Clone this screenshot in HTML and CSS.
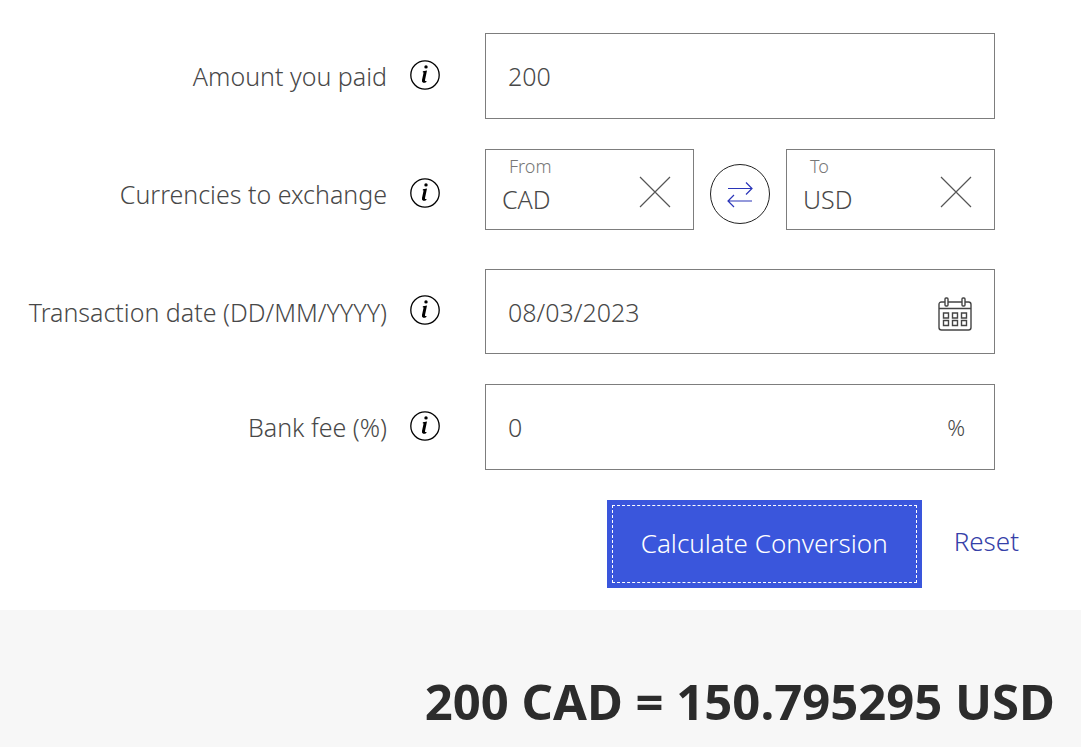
FILE: index.html
```html
<!DOCTYPE html>
<html lang="en">
<head>
<meta charset="utf-8">
<meta name="viewport" content="width=device-width, initial-scale=1">
<title>Currency converter</title>
<link rel="stylesheet" href="styles.css">
</head>
<body>
<svg class="sprite" aria-hidden="true">
  <symbol id="info" viewBox="0 0 30 30">
    <circle cx="15" cy="15" r="14.2" fill="none" stroke="currentColor" stroke-width="1.3"/>
    <circle cx="16" cy="6.9" r="1.7"/>
    <path d="M12.9 11.2 L17 10.5 L15 19.9 Q14.7 21.5 16.6 21 L16.3 21.9 Q14.8 23.1 13.2 22.8 Q11.5 22.3 12 20 L13.6 12.5 L12.7 12.2 Z"/>
  </symbol>
  <symbol id="cross" viewBox="0 0 32 32">
    <path d="M1 1 31 31M31 1 1 31" fill="none" stroke="currentColor" stroke-width="1.2"/>
  </symbol>
</svg>
<main>
  <form class="converter">
    <div class="row">
      <div class="row-label">
        <label for="amount">Amount you paid</label>
        <button class="icon-button" type="button" aria-label="About the amount"><svg class="info"><use href="#info"/></svg></button>
      </div>
      <div class="field"><input id="amount" type="text" value="200"></div>
    </div>

    <div class="row">
      <div class="row-label">
        <label for="from">Currencies to exchange</label>
        <button class="icon-button" type="button" aria-label="About the currencies"><svg class="info"><use href="#info"/></svg></button>
      </div>
      <div class="pair">
        <div class="currency">
          <div class="currency-text">
            <label for="from">From</label>
            <input id="from" type="text" value="CAD">
          </div>
          <button class="icon-button" type="button" aria-label="Clear from"><svg class="cross"><use href="#cross"/></svg></button>
        </div>
        <button class="swap" type="button" aria-label="Swap currencies">
          <svg class="arrows" viewBox="0 0 26 26"><path d="M1 7.500H25M19 1.500 25 7.500 19 13.500M25 20H1M7 14 1 20 7 26" fill="none" stroke="currentColor" stroke-width="1.2"/></svg>
        </button>
        <div class="currency">
          <div class="currency-text">
            <label for="to">To</label>
            <input id="to" type="text" value="USD">
          </div>
          <button class="icon-button" type="button" aria-label="Clear to"><svg class="cross"><use href="#cross"/></svg></button>
        </div>
      </div>
    </div>

    <div class="row">
      <div class="row-label">
        <label for="date">Transaction date (DD/MM/YYYY)</label>
        <button class="icon-button" type="button" aria-label="About the date"><svg class="info"><use href="#info"/></svg></button>
      </div>
      <div class="field field-date">
        <input id="date" type="text" value="08/03/2023">
        <button class="icon-button" type="button" aria-label="Open calendar">
          <svg class="calendar" viewBox="0 0 34 34" fill="none" stroke="currentColor" stroke-width="1.4">
            <path d="M7 5H3.500Q1 5 1 7.500V30.500Q1 33 3.500 33H30.500Q33 33 33 30.500V7.500Q33 5 30.500 5H27M10 5H24M1 11.500H33"/>
            <rect x="7" y="1" width="3" height="8" rx="1"/>
            <rect x="24" y="1" width="3" height="8" rx="1"/>
            <path d="M5.500 16h5v5h-5zM14.500 16h5v5h-5zM23.500 16h5v5h-5zM5.500 23.500h5v5h-5zM14.500 23.500h5v5h-5zM23.500 23.500h5v5h-5z"/>
          </svg>
        </button>
      </div>
    </div>

    <div class="row">
      <div class="row-label">
        <label for="fee">Bank fee (%)</label>
        <button class="icon-button" type="button" aria-label="About the bank fee"><svg class="info"><use href="#info"/></svg></button>
      </div>
      <div class="field"><input id="fee" type="text" value="0"><span class="unit">%</span></div>
    </div>

    <div class="actions">
      <button class="submit" type="button">Calculate Conversion</button>
      <a class="reset" href="#">Reset</a>
    </div>
  </form>
  <section class="result">
    <h1>200 CAD = 150.795295 USD</h1>
  </section>
</main>
</body>
</html>
```
FILE: styles.css
```css
* {
  box-sizing: border-box;
}

body {
  margin: 0;
  background: #fff;
  color: #484848;
  font: 300 25px/34px "Noto Sans", "Open Sans", sans-serif;
}

main {
  min-height: 100vh;
  display: flex;
  flex-direction: column;
}

.sprite {
  display: none;
}

button,
input {
  font: inherit;
  color: inherit;
  margin: 0;
  border-radius: 0;
}

.converter {
  display: flex;
  flex-direction: column;
  gap: 30px;
  padding: 33px 62px 22px 24px;
}

.row {
  display: grid;
  grid-template-columns: 416fr 510fr;
  column-gap: 45px;
  align-items: center;
  padding-right: 24px;
}

.row-label {
  display: flex;
  align-items: center;
  justify-content: flex-end;
  gap: 23px;
  white-space: nowrap;
}

.icon-button {
  display: flex;
  flex: none;
  padding: 0;
  border: 0;
  background: none;
  cursor: pointer;
}

.info {
  width: 30px;
  height: 30px;
  margin-bottom: 3px;
  color: #000;
}

.field {
  display: flex;
  align-items: center;
  gap: 16px;
  height: 86px;
  padding: 0 22px;
  border: 1px solid #7d7d7d;
}

.field-date {
  height: 85px;
}

.field input,
.currency input {
  flex: 1;
  width: 100%;
  min-width: 0;
  padding: 0;
  border: 0;
  background: none;
  outline: 0;
}

.calendar {
  width: 34px;
  height: 34px;
  margin-top: 4px;
  color: #444;
}

.unit {
  padding-right: 7px;
  font-size: 22px;
}

.pair {
  display: flex;
  align-items: flex-start;
  gap: 16px;
  height: 90px;
}

.currency {
  display: flex;
  flex: 1;
  align-items: center;
  min-width: 0;
  height: 81px;
  padding: 0 22px 0 16px;
  border: 1px solid #7d7d7d;
}

.currency-text {
  display: flex;
  flex: 1;
  flex-direction: column;
  min-width: 0;
  padding-bottom: 13px;
}

.currency label {
  padding-left: 7px;
  font-size: 18px;
  line-height: 32px;
  color: #777;
}

.currency input {
  flex: none;
  height: 34px;
  line-height: 34px;
}

.cross {
  width: 32px;
  height: 32px;
  margin-top: 4px;
  color: #555;
}

.swap {
  display: flex;
  flex: none;
  align-items: center;
  justify-content: center;
  width: 60px;
  height: 60px;
  margin-top: 15px;
  padding: 0;
  border: 1px solid #222;
  border-radius: 50%;
  background: none;
  color: #2a35b8;
}

.arrows {
  width: 26px;
  height: 26px;
  overflow: visible;
}

.actions {
  display: flex;
  justify-content: flex-end;
  align-items: center;
  gap: 32px;
  font-size: 26px;
}

.submit {
  height: 88px;
  padding: 0 34px 2px;
  border: 0;
  background: #3a56dc;
  color: #fff;
  outline: 1px dashed #fff;
  outline-offset: -6px;
}

.reset {
  padding-bottom: 6px;
  color: #3540a8;
  text-decoration: none;
}

.result {
  flex: 1;
  padding: 57px 26px 0;
  background: #f7f7f7;
}

.result h1 {
  margin: 0;
  font-size: 49px;
  line-height: 68px;
  font-weight: 700;
  text-align: right;
  color: #2c2c2c;
}
```
